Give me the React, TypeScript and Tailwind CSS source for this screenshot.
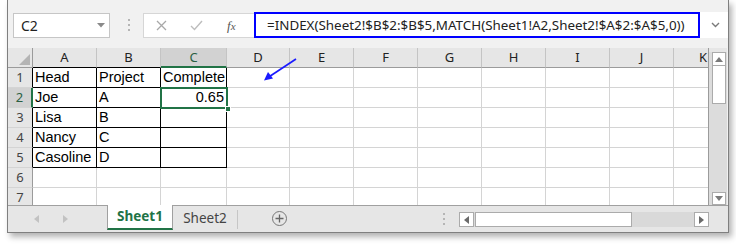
import React from "react";

const COLS = ["A", "B", "C", "D", "E", "F", "G", "H", "I", "J", "K"];
const WIDTHS = [64, 64, 66, 63, 64, 64, 64, 64, 64, 64, 35];
const DATA: Record<number, string[]> = {
  1: ["Head", "Project", "Complete"],
  2: ["Joe", "A", "0.65"],
  3: ["Lisa", "B", ""],
  4: ["Nancy", "C", ""],
  5: ["Casoline", "D", ""],
};

const UI = { fontFamily: '"Noto Sans", "Open Sans", sans-serif' };
const CELL = { fontFamily: '"Liberation Sans", Arial, sans-serif' };

function HeaderRow() {
  return (
    <div className="flex h-[20px]">
      <div className="relative h-[20px] w-[25px] shrink-0 border-b border-r border-[#9b9b9b] bg-[#e6e6e6]">
        <svg className="absolute bottom-[2px] right-[2px]" width="11" height="11" viewBox="0 0 11 11">
          <polygon points="11,0 11,11 0,11" fill="#b4b4b4" />
        </svg>
      </div>
      {COLS.map((c, i) => {
        const sel = i === 2;
        const bottom =
          i <= 1 ? "border-b border-b-black" : sel ? "border-b-2 border-b-[#217346]" : "border-b border-b-[#9b9b9b]";
        return (
          <div
            key={c}
            style={{ width: WIDTHS[i], ...UI }}
            className={`h-[20px] shrink-0 border-r border-r-[#c4c4c4] ${bottom} ${
              sel ? "bg-[#d2d2d2] text-[#2b5f43]" : "bg-[#e6e6e6] text-[#222]"
            } flex items-center justify-center text-[13px] leading-none ${i === 10 ? "justify-end pr-[1px]" : ""}`}
          >
            {c}
          </div>
        );
      })}
    </div>
  );
}

function Row({ r }: { r: number }) {
  const vals = DATA[r] || [];
  const sel = r === 2;
  const rhBorder = sel ? "border-r-2 border-r-[#217346]" : r <= 5 ? "border-r border-r-black" : "border-r border-r-[#9b9b9b]";
  return (
    <div className="flex h-[20px]">
      <div
        style={UI}
        className={`h-[20px] w-[25px] shrink-0 border-b border-b-[#d4d4d4] ${rhBorder} ${
          sel ? "bg-[#d2d2d2] text-[#2b5f43]" : "bg-[#e6e6e6] text-[#444]"
        } flex items-center justify-center text-[13px] leading-none`}
      >
        {r}
      </div>
      {COLS.map((c, i) => {
        const inT = r <= 5 && i <= 2;
        const v = vals[i] || "";
        const right = i === 2 && r === 2;
        return (
          <div
            key={c}
            style={{ width: WIDTHS[i], ...CELL }}
            className={`h-[20px] shrink-0 border-r border-b ${inT ? "border-r-black" : "border-r-[#d4d4d4]"} ${
              inT ? "border-b-black" : "border-b-[#d4d4d4]"
            } flex items-end overflow-hidden whitespace-nowrap px-[2px] pb-[1px] text-[14.5px] leading-[17px] text-black ${
              right ? "justify-end" : ""
            }`}
          >
            {v}
          </div>
        );
      })}
    </div>
  );
}

export default function App() {
  return (
    <div className="h-[245px] w-[736px] overflow-hidden bg-white pl-[7px]">
      <div className="relative h-[233px] w-[722px] border-b border-l border-r border-[#7f7f7f] bg-[#f1f1f1] shadow-[3px_4px_6px_rgba(0,0,0,0.3)]">
        {/* Formula bar */}
        <div className="flex h-[48px] items-start pt-[12px]">
          <div
            style={UI}
            className="ml-[5px] mt-[1px] flex h-[25px] w-[97px] items-center justify-between border border-[#c6c6c6] bg-white pl-[7px] pr-[4px] text-[14px] text-[#222]"
          >
            <span>C2</span>
            <svg width="8" height="5" viewBox="0 0 8 5">
              <polygon points="0,0 8,0 4,4.5" fill="#8a8a8a" />
            </svg>
          </div>
          <div className="ml-[18px] mt-[7px] flex flex-col gap-[3px]">
            <div className="h-[2px] w-[2px] bg-[#b5b5b5]" />
            <div className="h-[2px] w-[2px] bg-[#b5b5b5]" />
            <div className="h-[2px] w-[2px] bg-[#b5b5b5]" />
          </div>
          <div className="ml-[13px] mt-[1px] flex h-[25px] w-[112px] items-center border border-r-0 border-[#d6d6d6] bg-white">
            <svg className="ml-[12px]" width="11" height="11" viewBox="0 0 11 11">
              <path d="M1 1 L10 10 M10 1 L1 10" stroke="#a8a8a8" strokeWidth="1.3" />
            </svg>
            <svg className="ml-[23px]" width="13" height="11" viewBox="0 0 13 11">
              <path d="M1 6 L4.5 9.5 L12 1" stroke="#bdbdbd" strokeWidth="1.4" fill="none" />
            </svg>
            <span
              className="ml-[24px] text-[13px] italic text-[#555]"
              style={{ fontFamily: '"Liberation Serif", "Times New Roman", serif' }}
            >
              f<span className="text-[11px]">x</span>
            </span>
          </div>
          <div className="-ml-[1px] flex h-[26px] flex-1 items-center bg-white">
            <div
              style={UI}
              className="flex h-[26px] w-[446px] items-center border-2 border-[#0000ff] pl-[11px] text-[13.4px] text-[#222]"
            >
              =INDEX(Sheet2!$B$2:$B$5,MATCH(Sheet1!A2,Sheet2!$A$2:$A$5,0))
            </div>
            <svg className="ml-[11px]" width="9" height="6" viewBox="0 0 9 6">
              <path d="M1 1 L4.5 4.5 L8 1" stroke="#7a7a7a" strokeWidth="1.4" fill="none" />
            </svg>
          </div>
        </div>

        {/* Grid area */}
        <div className="flex h-[157px]">
          <div className="relative h-[157px] w-[701px] overflow-hidden border-r border-[#9b9b9b] bg-white">
            <HeaderRow />
            {[1, 2, 3, 4, 5, 6, 7].map((r) => (
              <Row key={r} r={r} />
            ))}
            <div className="absolute left-[152px] top-[39px] h-[22px] w-[68px] border-2 border-[#217346]" />
            <div className="absolute left-[217px] top-[58px] h-[6px] w-[6px] border border-white bg-[#217346]" />
          </div>
          <div className="flex h-[157px] w-[18px] flex-col bg-[#dcdcdc]">
            <div className="h-[4px] bg-[#e6e6e6]" />
            <div className="ml-[3px] flex h-[14px] w-[14px] items-center justify-center border border-[#ababab] bg-white">
              <svg width="8" height="5" viewBox="0 0 8 5">
                <polygon points="0,5 8,5 4,0" fill="#7a7a7a" />
              </svg>
            </div>
            <div className="ml-[3px] h-[38px] w-[14px] border border-t-0 border-[#ababab] bg-white" />
            <div className="flex-1" />
            <div className="ml-[3px] flex h-[13px] w-[14px] items-center justify-center border border-[#ababab] bg-white">
              <svg width="8" height="5" viewBox="0 0 8 5">
                <polygon points="0,0 8,0 4,5" fill="#7a7a7a" />
              </svg>
            </div>
          </div>
        </div>

        {/* Tab bar */}
        <div className="flex h-[27px] items-start border-t border-[#a0a0a0] bg-[#e6e6e6]">
          <div className="flex h-[26px] w-[99px] items-center">
            <svg className="ml-[26px]" width="5" height="8" viewBox="0 0 5 8">
              <polygon points="5,0 5,8 0,4" fill="#c2c2c2" />
            </svg>
            <svg className="ml-[24px]" width="5" height="8" viewBox="0 0 5 8">
              <polygon points="0,0 0,8 5,4" fill="#c2c2c2" />
            </svg>
          </div>
          <div
            style={UI}
            className="-mt-[1px] flex h-[25px] w-[66px] items-center justify-center border-b-2 border-l border-r border-b-[#217346] border-l-[#a0a0a0] border-r-[#a0a0a0] bg-white text-[13.5px] font-bold text-[#217346]"
          >
            Sheet1
          </div>
          <div style={UI} className="flex h-[24px] w-[64px] items-center justify-center text-[13.5px] text-[#444]">
            Sheet2
          </div>
          <div className="mt-[4px] h-[19px] w-[1px] bg-[#c6c6c6]" />
          <div className="ml-[34px] mt-[5px] flex h-[15px] w-[15px] items-center justify-center rounded-full border border-[#777]">
            <svg width="9" height="9" viewBox="0 0 9 9">
              <path d="M4.5 0.5 V8.5 M0.5 4.5 H8.5" stroke="#666" strokeWidth="1.3" />
            </svg>
          </div>
          <div className="ml-[156px] mt-[7px] flex flex-col gap-[3px]">
            <div className="h-[2px] w-[2px] bg-[#b5b5b5]" />
            <div className="h-[2px] w-[2px] bg-[#b5b5b5]" />
            <div className="h-[2px] w-[2px] bg-[#b5b5b5]" />
          </div>
          <div className="ml-[14px] mt-[6px] flex h-[15px] w-[250px] items-stretch bg-[#d9d9d9]">
            <div className="flex w-[15px] items-center justify-center border border-[#ababab] bg-white">
              <svg width="5" height="8" viewBox="0 0 5 8">
                <polygon points="5,0 5,8 0,4" fill="#6a6a6a" />
              </svg>
            </div>
            <div className="ml-[1px] w-[157px] border border-[#ababab] bg-white" />
            <div className="flex-1" />
            <div className="flex w-[15px] items-center justify-center border border-[#ababab] bg-white">
              <svg width="5" height="8" viewBox="0 0 5 8">
                <polygon points="0,0 0,8 5,4" fill="#6a6a6a" />
              </svg>
            </div>
          </div>
        </div>

        {/* annotation arrow */}
        <svg className="pointer-events-none absolute left-[240px] top-[50px]" width="60" height="40" viewBox="0 0 60 40">
          <path d="M48 9 L20 27.5" stroke="#1a1aff" strokeWidth="1.7" fill="none" />
          <polygon points="16,30.5 20,22 25,28.5" fill="#1a1aff" />
        </svg>
      </div>
    </div>
  );
}
